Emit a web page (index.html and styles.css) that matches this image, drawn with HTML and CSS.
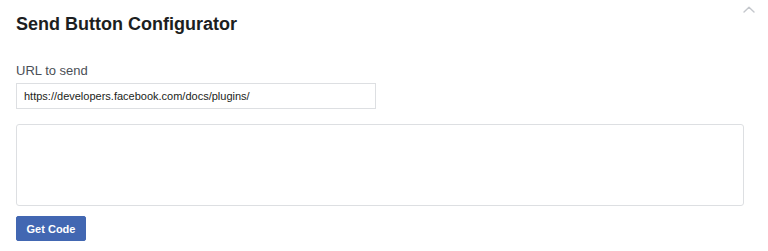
FILE: index.html
```html
<!DOCTYPE html>
<html lang="en">
<head>
    <meta charset="UTF-8">
    <meta name="viewport" content="width=device-width, initial-scale=1.0">
    <title>Send Button Configurator</title>
    <link rel="stylesheet" href="styles.css">
</head>
<body>
    <div class="configurator">
        <div class="header">
            <h2 class="title">Send Button Configurator</h2>
            <span class="collapse">
                <svg width="12" height="7" viewBox="0 0 12 7">
                    <path d="M1 6 L6 1.2 L11 6" fill="none" stroke="#c4c7cc" stroke-width="1.4" stroke-linecap="round" stroke-linejoin="round"/>
                </svg>
            </span>
        </div>

        <form class="config-form">
            <label for="url" class="field-label">URL to send</label>
            <input type="text" id="url" class="url-input" value="https://developers.facebook.com/docs/plugins/">

            <textarea class="code-output" readonly></textarea>

            <button type="button" class="btn-primary">Get Code</button>
        </form>
    </div>
</body>
</html>
```

FILE: styles.css
```css
* {
    margin: 0;
    padding: 0;
    box-sizing: border-box;
}

body {
    font-family: 'Liberation Sans', Arial, Helvetica, sans-serif;
    background: #fff;
    color: #1c1e21;
}

.configurator {
    padding: 6px 13px 0 16px;
}

.header {
    display: flex;
    justify-content: space-between;
    align-items: flex-start;
}

.title {
    margin-top: 7px;
    font-size: 18px;
    line-height: 22px;
    font-weight: 700;
    color: #1c1e21;
}

.collapse {
    display: flex;
    width: 12px;
    height: 7px;
}

.config-form {
    display: flex;
    flex-direction: column;
    align-items: flex-start;
    width: 728px;
}

.field-label {
    margin-top: 28px;
    margin-bottom: 4px;
    font-size: 13px;
    line-height: 16px;
    color: #4b4f56;
}

.url-input {
    width: 360px;
    height: 26px;
    padding: 0 7px;
    border: 1px solid #dddfe2;
    font-family: inherit;
    font-size: 11px;
    color: #1c1e21;
    background: #fff;
    outline: none;
}

.code-output {
    width: 728px;
    height: 82px;
    margin-top: 15px;
    border: 1px solid #dddfe2;
    border-radius: 3px;
    resize: none;
    outline: none;
    font-family: inherit;
    background: #fff;
}

.btn-primary {
    width: 70px;
    height: 25px;
    margin-top: 10px;
    background: #4267b2;
    border: 1px solid #4267b2;
    border-radius: 2px;
    color: #fff;
    font-family: inherit;
    font-size: 11px;
    font-weight: 700;
    cursor: pointer;
}
```
